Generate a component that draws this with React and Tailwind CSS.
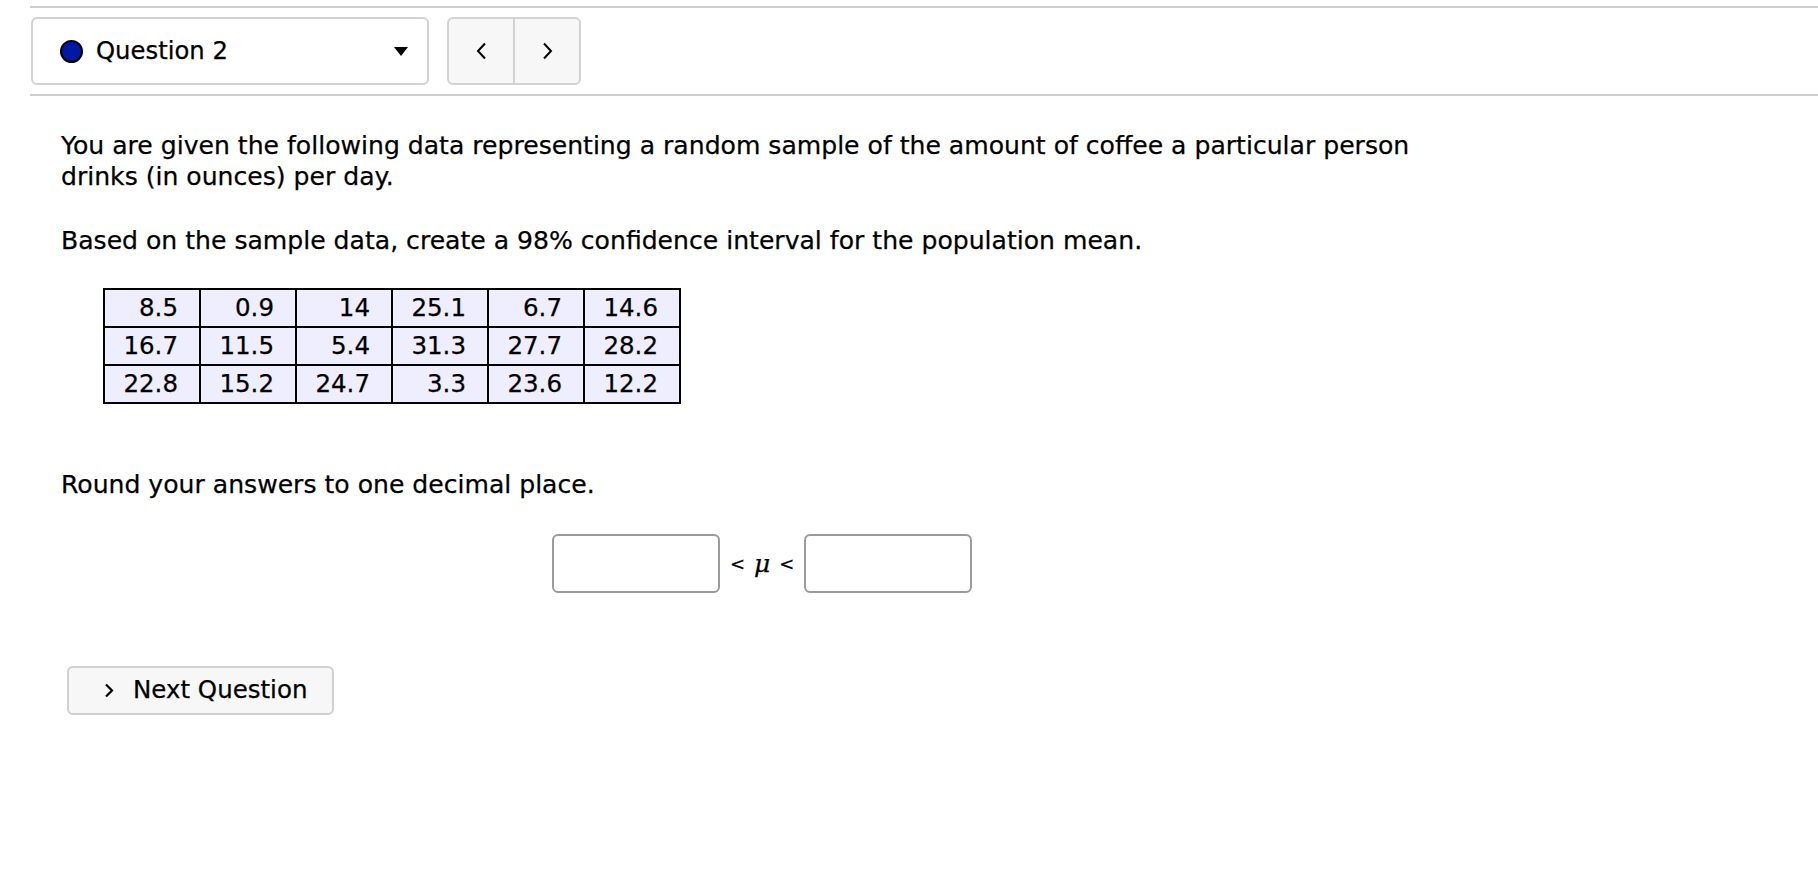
import React from 'react';

const rows = [
  ['8.5', '0.9', '14', '25.1', '6.7', '14.6'],
  ['16.7', '11.5', '5.4', '31.3', '27.7', '28.2'],
  ['22.8', '15.2', '24.7', '3.3', '23.6', '12.2']
];

const Chevron = ({ dir }) => (
  <svg width="11" height="18" viewBox="0 0 11 18" className="block">
    {dir === 'left' ? (
      <polyline points="9,1.5 2,9 9,16.5" fill="none" stroke="#000" strokeWidth="2" />
    ) : (
      <polyline points="2,1.5 9,9 2,16.5" fill="none" stroke="#000" strokeWidth="2" />
    )}
  </svg>
);

const App = () => {
  return (
    <div className="min-h-screen bg-white text-black font-['DejaVu_Sans',sans-serif] [-webkit-text-stroke:0.25px_#000]">
      {/* Question selector bar */}
      <div className="pl-[30px]">
        <div className="h-[2px] mt-[6px] bg-[#cfcfcf]" />
        <div className="flex items-stretch gap-[18px] pl-px py-[9px]">
          <div className="w-[398px] h-[68px] flex items-center border-2 border-[#d2d2d2] rounded-[6px] bg-white pl-[27px] pr-[19px]">
            <span className="w-[23px] h-[23px] rounded-full bg-[#0019a5] border-2 border-black shrink-0" />
            <span className="ml-[13px] text-[24.3px] leading-none">Question 2</span>
            <svg width="14" height="9" viewBox="0 0 14 9" className="ml-auto">
              <polygon points="0,0 14,0 7,9" fill="#000" />
            </svg>
          </div>
          <div className="w-[134px] h-[68px] flex border-2 border-[#d2d2d2] rounded-[6px] bg-[#f7f7f7]">
            <button type="button" className="flex-1 flex items-center justify-center">
              <Chevron dir="left" />
            </button>
            <div className="w-[2px] bg-[#d2d2d2]" />
            <button type="button" className="flex-1 flex items-center justify-center">
              <Chevron dir="right" />
            </button>
          </div>
        </div>
        <div className="h-[2px] bg-[#cfcfcf]" />
      </div>

      {/* Question body */}
      <div className="pl-[61px] text-[25.1px] leading-[31px]">
        <p className="mt-[34px]">
          You are given the following data representing a random sample of the amount of coffee a particular person
          <br />
          drinks (in ounces) per day.
        </p>
        <p className="mt-[33px]">Based on the sample data, create a 98% confidence interval for the population mean.</p>

        <table className="mt-[32px] ml-[42px] border-collapse border-2 border-black text-[24.5px] leading-none">
          <tbody>
            {rows.map((row, i) => (
              <tr key={i}>
                {row.map((v, j) => (
                  <td
                    key={j}
                    className="h-[38px] w-[96px] border-2 border-black bg-[#eeeeff] text-right pr-[21px] pl-[18px]"
                  >
                    {v}
                  </td>
                ))}
              </tr>
            ))}
          </tbody>
        </table>

        <p className="mt-[65px]">Round your answers to one decimal place.</p>

        <div className="mt-[34px] ml-[491px] flex items-center">
          <input
            type="text"
            className="w-[168px] h-[59px] border-2 border-[#9b9b9b] rounded-[6px] bg-white outline-none"
          />
          <span className="ml-[10px] text-[18px] leading-none">&lt;</span>
          <span className="ml-[9px] text-[25px] leading-none italic font-['DejaVu_Serif',serif]">μ</span>
          <span className="ml-[9px] text-[18px] leading-none">&lt;</span>
          <input
            type="text"
            className="ml-[10px] w-[168px] h-[59px] border-2 border-[#9b9b9b] rounded-[6px] bg-white outline-none"
          />
        </div>

        <button
          type="button"
          className="mt-[73px] ml-[6px] w-[267px] h-[49px] flex items-center border-2 border-[#d0d0d0] rounded-[6px] bg-[#f7f7f7] pl-[35px]"
        >
          <svg width="10" height="15" viewBox="0 0 10 15" className="block">
            <polyline points="2,1.5 8,7.5 2,13.5" fill="none" stroke="#000" strokeWidth="2.2" />
          </svg>
          <span className="ml-[19px] text-[24.5px] leading-none">Next Question</span>
        </button>
      </div>
    </div>
  );
};

export default App;
